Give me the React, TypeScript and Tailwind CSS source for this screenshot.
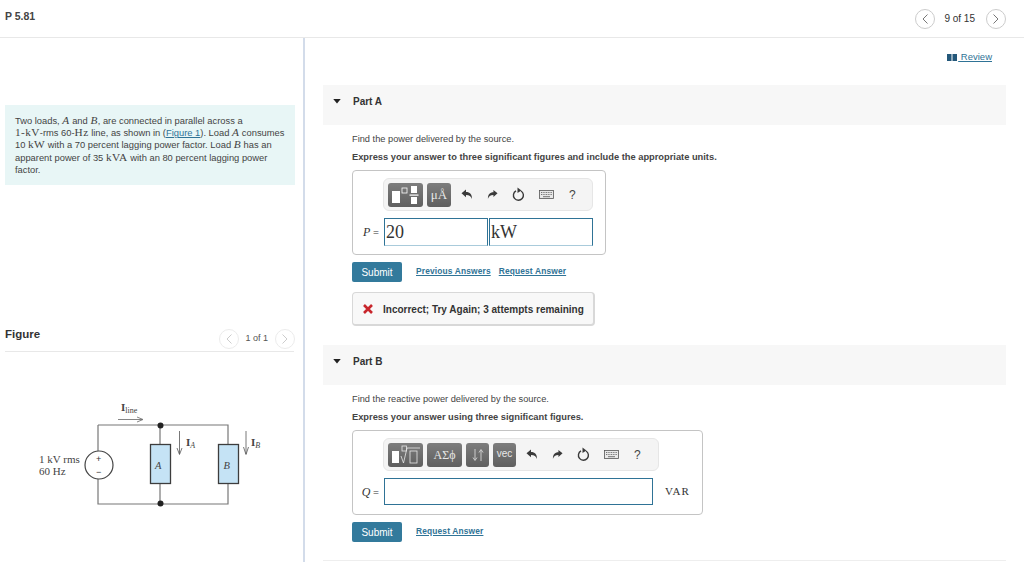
import React from "react";

const M = ({ children, i = false }: { children: React.ReactNode; i?: boolean }) => (
  <span className={`font-['Liberation_Serif',serif] text-[11.3px] leading-[0] tracking-[0.4px] ${i ? "italic" : ""}`}>{children}</span>
);

const Chevron = ({ dir, light = false }: { dir: "l" | "r"; light?: boolean }) => (
  <div className={`w-[20px] h-[20px] rounded-full border flex items-center justify-center bg-white ${light ? "border-[#ececec]" : "border-[#cccccc]"}`}>
    <svg width="8" height="12" viewBox="0 0 8 12" fill="none" stroke={light ? "#cccccc" : "#777777"} strokeWidth="1">
      {dir === "l" ? <path d="M6.5 1.5 L2 6 L6.5 10.5" /> : <path d="M1.5 1.5 L6 6 L1.5 10.5" />}
    </svg>
  </div>
);

const Undo = () => (
  <svg width="12" height="11" viewBox="0 0 12 11" fill="#3a3a3a"><path d="M0.5 4.2 L5 0.5 V3 C9 3 11 5.5 11 10 C10 7.5 8.5 6 5 6 V8.2 Z" /></svg>
);
const Redo = () => (
  <svg width="11" height="11" viewBox="0 0 12 11" fill="#3a3a3a"><path d="M11.5 4.2 L7 0.5 V3 C3 3 1 5.5 1 10 C2 7.5 3.5 6 7 6 V8.2 Z" /></svg>
);
const Reset = () => (
  <svg width="13" height="15" viewBox="0 0 13 15" fill="none" stroke="#3a3a3a" strokeWidth="1.4">
    <path d="M9 4 A5 5 0 1 1 4 3.9" />
    <path d="M5.5 0.5 L9.4 3.5 L5.5 6 Z" fill="#3a3a3a" stroke="none" />
  </svg>
);
const Keyboard = () => (
  <svg width="15" height="9" viewBox="0 0 15 9" fill="none" stroke="#555555" strokeWidth="0.8">
    <rect x="0.5" y="0.5" width="14" height="8" fill="#e8e8e8" />
    <path d="M2 2.5 H13 M2 4.5 H13" strokeDasharray="1 0.7" />
    <path d="M4 6.7 H11" />
  </svg>
);

const ToolBtn = ({ w, children }: { w: string; children: React.ReactNode }) => (
  <div className={`${w} h-[24px] rounded-[3px] bg-gradient-to-b from-[#7d7d7d] to-[#5f5f5f] flex items-center justify-center text-[#e8e8e8]`}>
    {children}
  </div>
);

const ToolEnd = () => (
  <div className="flex items-center gap-[14px]">
    <Undo />
    <Redo />
    <Reset />
    <Keyboard />
    <span className="text-[12px] text-[#444444] ml-[1px]">?</span>
  </div>
);

const Toolbar = ({ w, children }: { w: string; children: React.ReactNode }) => (
  <div className={`${w} h-[33px] ml-[30px] rounded-[6px] border border-[#e6e6e6] bg-[#f4f4f4] flex items-center pl-[4px]`}>
    {children}
  </div>
);

const FracIcon = () => (
  <svg width="30" height="20" viewBox="0 0 30 20">
    <rect x="1" y="6" width="8" height="12" fill="#ffffff" />
    <rect x="11" y="3" width="5" height="5" fill="none" stroke="#ffffff" strokeWidth="0.8" />
    <rect x="20" y="1" width="6" height="7" fill="#ffffff" />
    <rect x="18.5" y="9.5" width="9" height="1.2" fill="#ffffff" />
    <rect x="20" y="12" width="6" height="7" fill="#ffffff" />
  </svg>
);

const RootIcon = () => (
  <svg width="30" height="20" viewBox="0 0 30 20">
    <rect x="1" y="6" width="7" height="12" fill="#ffffff" />
    <rect x="11" y="1" width="4.5" height="5" fill="none" stroke="#e8e8e8" strokeWidth="0.8" />
    <path d="M10 11 L12.5 18 L16 3 H29" fill="none" stroke="#e8e8e8" strokeWidth="0.8" />
    <rect x="19" y="6" width="7" height="12" fill="none" stroke="#e8e8e8" strokeWidth="0.8" />
  </svg>
);

const ArrowsIcon = () => (
  <svg width="14" height="14" viewBox="0 0 14 14" fill="none" stroke="#cccccc" strokeWidth="1">
    <path d="M4 1 V12 M2 9.5 L4 12.5 L6 9.5 M10 13 V2 M8 4.5 L10 1.5 L12 4.5" />
  </svg>
);

const PartHeader = ({ title }: { title: string }) => (
  <div className="ml-[18px] w-[683px] h-[40px] bg-[#f7f7f7] flex items-start pt-[10px] pl-[10px]">
    <svg width="8" height="5" viewBox="0 0 9 6" fill="#222222" className="mt-[4px]"><path d="M0 0 H9 L4.5 5.5 Z" /></svg>
    <span className="ml-[12px] text-[10px] leading-[13px] font-bold text-[#333333]">{title}</span>
  </div>
);

const Submit = () => (
  <button className="w-[50px] h-[20px] rounded-[2px] bg-[#337a9c] text-white text-[10px] flex items-center justify-center">Submit</button>
);

const LinkT = ({ children }: { children: React.ReactNode }) => (
  <a className="text-[8.4px] font-bold text-[#2f7396] underline tracking-[0.15px]">{children}</a>
);

const Circuit = () => (
  <svg width="260" height="125" viewBox="20 390 260 125" className="ml-[15px] mt-[39px]">
    <g fill="none" stroke="#777777" strokeWidth="1.2">
      <path d="M98 424 H228 V443 M228 482 V503 H98 V478 M98 450 V424" />
      <path d="M160 424 V443 M160 482 V503" />
    </g>
    <rect x="150.5" y="443.5" width="20" height="39" fill="#c5e3f5" stroke="#3d3d3d" strokeWidth="1.3" />
    <rect x="218.5" y="443.5" width="20" height="39" fill="#c5e3f5" stroke="#3d3d3d" strokeWidth="1.3" />
    <circle cx="99" cy="464" r="14" fill="#ffffff" stroke="#444444" strokeWidth="1.2" />
    <circle cx="160.5" cy="424.5" r="3" fill="#222222" />
    <circle cx="160.5" cy="502.5" r="3" fill="#222222" />
    <path d="M118 418.5 H142 M137 416 L143 418.5 L137 421" fill="none" stroke="#666666" strokeWidth="0.8" />
    <path d="M179.5 430 V453 M177 447 L179.5 453.5 L182 447" fill="none" stroke="#555555" strokeWidth="0.8" />
    <path d="M246 430 V453 M243.5 446 L246 453.5 L248.5 446" fill="none" stroke="#555555" strokeWidth="0.8" />
    <g fontFamily="'Liberation Serif', serif" fill="#444444">
      <text x="39" y="462" fontSize="11">1 kV rms</text>
      <text x="39" y="474" fontSize="11">60 Hz</text>
      <text x="155" y="468" fontSize="10.5" fontStyle="italic">A</text>
      <text x="223.5" y="468" fontSize="10.5" fontStyle="italic">B</text>
      <text x="121" y="410" fontSize="11" fontWeight="bold">I<tspan fontSize="8" fontWeight="normal" dy="2">line</tspan></text>
      <text x="186" y="445" fontSize="11" fontWeight="bold">I<tspan fontSize="8" fontWeight="normal" fontStyle="italic" dy="2">A</tspan></text>
      <text x="251" y="445" fontSize="11" fontWeight="bold">I<tspan fontSize="8" fontWeight="normal" fontStyle="italic" dy="2">B</tspan></text>
    </g>
    <g fontFamily="'Liberation Sans', sans-serif" fill="#333333">
      <text x="96" y="461" fontSize="9">+</text>
      <text x="96" y="474" fontSize="9">−</text>
    </g>
  </svg>
);

export default function App() {
  return (
    <div className="w-[1024px] h-[562px] overflow-hidden bg-white font-['Liberation_Sans',Arial,sans-serif] text-[#333333]">
      <header className="h-[38px] border-b border-[#e8e8e8] flex items-center justify-between pl-[5px] pr-[18px]">
        <span className="text-[10.5px] font-bold text-[#444444] -mt-[4px]">P 5.81</span>
        <div className="flex items-center">
          <Chevron dir="l" />
          <span className="text-[10px] ml-[9px] mr-[11px]">9 of 15</span>
          <Chevron dir="r" />
        </div>
      </header>
      <div className="flex h-[524px]">
        <aside className="w-[305px] shrink-0 border-r-2 border-[#d3dcea] pl-[5px] pr-[8px] pt-[67px]">
          <div className="w-[290px] h-[80px] bg-[#e8f6f6] pl-[10px] pt-[10px] text-[9.35px] leading-[12.2px] text-[#444444]">
            Two loads, <M i>A</M> and <M i>B</M>, are connected in parallel across a<br />
            <M>1-kV</M>-rms 60-<M>Hz</M> line, as shown in (<a className="text-[#2f7396] underline">Figure 1</a>). Load <M i>A</M> consumes<br />
            10 <M>kW</M> with a 70 percent lagging power factor. Load <M i>B</M> has an<br />
            apparent power of 35 <M>kVA</M> with an 80 percent lagging power<br />
            factor.
          </div>
          <div className="mt-[141px] h-[26px] w-[289px] border-b border-[#e8e8e8] flex items-start justify-between">
            <span className="text-[11.5px] font-bold text-[#333333]">Figure</span>
            <div className="flex items-center mt-[3px] -mr-[1px]">
              <Chevron dir="l" light />
              <span className="text-[9px] ml-[6px] mr-[7px] text-[#555555]">1 of 1</span>
              <Chevron dir="r" light />
            </div>
          </div>
          <Circuit />
        </aside>
        <main className="flex-1 min-w-0">
          <div className="h-[47px] flex justify-end pr-[32px] pt-[14px]">
            <div className="flex items-center h-[10px] text-[9.5px] text-[#2f7396]">
              <svg width="10" height="7" viewBox="0 0 10 7" fill="#24587a"><rect x="0" y="0" width="4.5" height="7" /><rect x="5.5" y="0" width="4.5" height="7" /></svg>
              <a className="underline ml-[1px] whitespace-pre"> Review</a>
            </div>
          </div>
          <PartHeader title="Part A" />
          <div className="pl-[47px]">
            <p className="text-[9.25px] text-[#444444] mt-[9px] leading-[11px]">Find the power delivered by the source.</p>
            <p className="text-[9.3px] font-bold text-[#444444] mt-[7px] leading-[11px]">Express your answer to three significant figures and include the appropriate units.</p>
            <div className="mt-[7px] w-[254px] h-[85px] rounded-[4px] border border-[#c4c4c4] pt-[7px]">
              <Toolbar w="w-[210px]">
                <ToolBtn w="w-[35px]"><FracIcon /></ToolBtn>
                <div className="ml-[4px]"><ToolBtn w="w-[24px]"><span className="font-['Liberation_Serif',serif] text-[13px]">μÅ</span></ToolBtn></div>
                <div className="ml-[10px]"><ToolEnd /></div>
              </Toolbar>
              <div className="flex items-center mt-[7px]">
                <span className="w-[31px] text-right pr-[5px] text-[10.5px] font-['Liberation_Serif',serif]"><i className="text-[12px]">P</i> =</span>
                <div className="w-[104px] h-[28px] border border-[#2f7396] border-b-[#a9cbdb] flex items-center pl-[1px] font-['Liberation_Serif',serif] text-[18px]">20</div>
                <div className="ml-[1px] w-[104px] h-[28px] border border-[#2f7396] border-b-[#a9cbdb] flex items-center pl-[1px] font-['Liberation_Serif',serif] text-[18px]">kW</div>
              </div>
            </div>
            <div className="flex items-center mt-[7px]">
              <Submit />
              <div className="ml-[14px] flex gap-[8px] -mt-[1px]">
                <LinkT>Previous Answers</LinkT>
                <LinkT>Request Answer</LinkT>
              </div>
            </div>
            <div className="mt-[10px] w-[243px] h-[34px] rounded-[4px] border border-[#d8d8d8] border-b-2 border-r-2 bg-[#f8f8f8] flex items-center pl-[10px]">
              <svg width="10" height="10" viewBox="0 0 10 10" stroke="#c8262c" strokeWidth="2.6"><path d="M1 1 L9 9 M9 1 L1 9" /></svg>
              <span className="ml-[10px] text-[10px] font-bold text-[#333333] pt-[1px]">Incorrect; Try Again; 3 attempts remaining</span>
            </div>
          </div>
          <div className="mt-[19px]">
            <PartHeader title="Part B" />
          </div>
          <div className="pl-[47px]">
            <p className="text-[9.25px] text-[#444444] mt-[9px] leading-[11px]">Find the reactive power delivered by the source.</p>
            <p className="text-[9.3px] font-bold text-[#444444] mt-[7px] leading-[11px]">Express your answer using three significant figures.</p>
            <div className="mt-[7px] w-[351px] h-[85px] rounded-[4px] border border-[#c4c4c4] pt-[7px]">
              <Toolbar w="w-[276px]">
                <ToolBtn w="w-[35px]"><RootIcon /></ToolBtn>
                <div className="ml-[4px]"><ToolBtn w="w-[35px]"><span className="font-['Liberation_Serif',serif] text-[12px]">ΑΣϕ</span></ToolBtn></div>
                <div className="ml-[4px]"><ToolBtn w="w-[23px]"><ArrowsIcon /></ToolBtn></div>
                <div className="ml-[4px]"><ToolBtn w="w-[23px]"><span className="text-[10px] -mt-[2px]">vec</span></ToolBtn></div>
                <div className="ml-[10px]"><ToolEnd /></div>
              </Toolbar>
              <div className="flex items-center mt-[7px]">
                <span className="w-[31px] text-right pr-[5px] text-[10.5px] font-['Liberation_Serif',serif]"><i className="text-[12px]">Q</i> =</span>
                <div className="w-[269px] h-[27px] border border-[#2f7396]" />
                <span className="ml-[12px] text-[11px] tracking-[1px] font-['Liberation_Serif',serif]">VAR</span>
              </div>
            </div>
            <div className="flex items-center mt-[7px]">
              <Submit />
              <div className="ml-[14px] flex -mt-[1px]"><LinkT>Request Answer</LinkT></div>
            </div>
          </div>
          <div className="ml-[18px] w-[683px] h-px mt-[18px] bg-[#eeeeee]" />
        </main>
      </div>
    </div>
  );
}
